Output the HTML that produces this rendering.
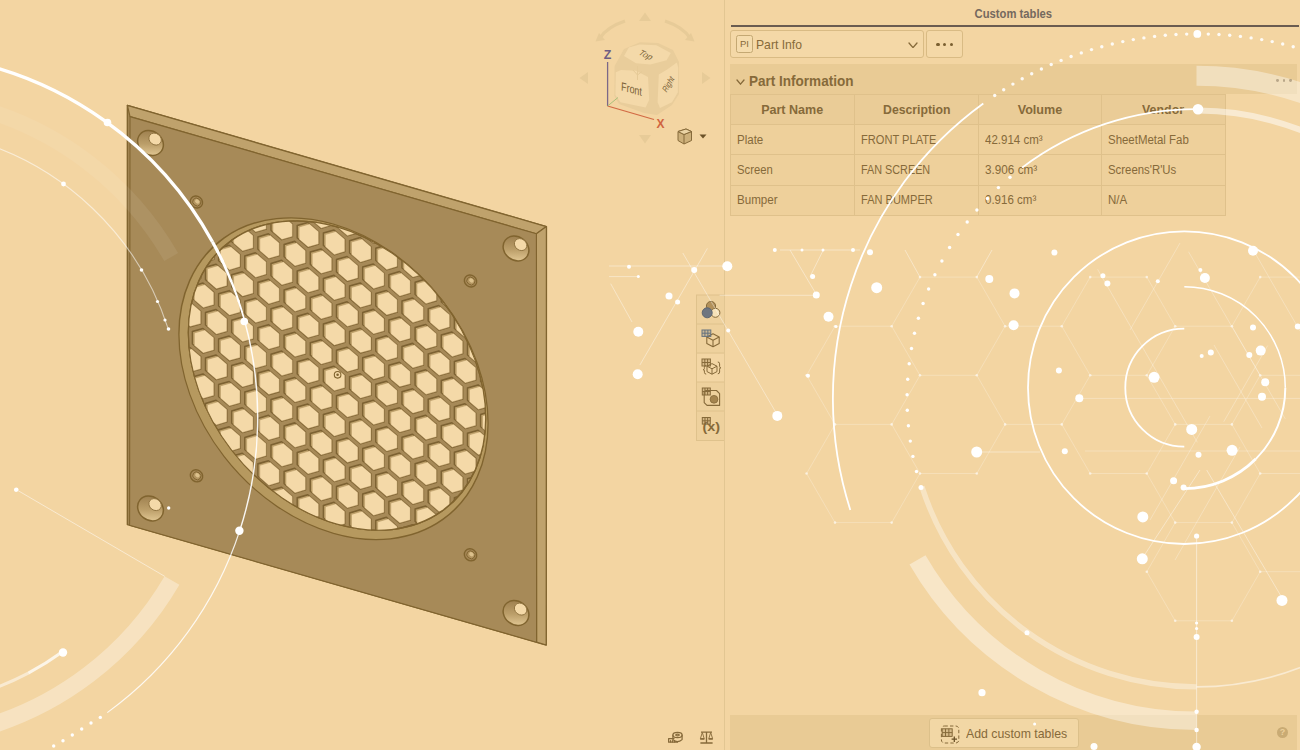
<!DOCTYPE html>
<html lang="en"><head><meta charset="utf-8"><title>Custom tables</title>
<style>

*{box-sizing:border-box;margin:0;padding:0}
html,body{width:1300px;height:750px;overflow:hidden;background:#f3d5a2;font-family:"Liberation Sans",sans-serif;color:#866a3a}
#view{position:absolute;left:0;top:0;width:725px;height:750px;overflow:hidden}
#model{position:absolute;left:0;top:0}
#panel{position:absolute;left:724px;top:0;width:576px;height:750px;border-left:1px solid #e2c692}
#decor{position:absolute;left:0;top:0;pointer-events:none}
.abs{position:absolute;white-space:nowrap}
.sx{display:inline-block;transform-origin:0 50%;white-space:nowrap}
.title{left:0;width:576px;top:7px;text-align:center;font-size:12px;font-weight:bold;color:#75695e}
.rule{left:5.5px;top:25.1px;width:568px;height:1.6px;background:#6a5c50}
.dd{left:5px;top:30px;width:194px;height:28px;border:1px solid #d9bb84;border-radius:3px;background:#f4d8a7}
.pi{left:4.5px;top:4px;width:17.6px;height:18px;border:1px solid #c4a873;border-radius:2.5px;font-size:9.5px;text-align:center;line-height:16.5px;color:#866a3a;background:#f5dcad;letter-spacing:-0.2px}
.ddt{left:25px;top:6px;font-size:13px;color:#866a3a}
.more{left:201px;top:30px;width:37px;height:28px;border:1px solid #d9bb84;border-radius:3px;background:#f4d8a7}
.dot{position:absolute;width:3.4px;height:3.4px;border-radius:50%;background:#7a5f30}
.sec{left:5px;top:64px;width:567px;height:30px;background:#e9cb95}
.sect{left:18.5px;top:8.5px;font-size:14px;font-weight:bold;color:#866a3a}
table{position:absolute;left:5px;top:94px;border-collapse:collapse;table-layout:fixed;width:496px}
td,th{border:1px solid #dfc18b;height:30.3px;font-size:12px;padding:0 0 0 6px;text-align:left;font-weight:normal;color:#866a3a;background:#eed09b;white-space:nowrap;overflow:hidden}
th{font-weight:bold;font-size:13px;text-align:center;padding:0;background:#eacc97;height:30px}
.foot{left:5px;top:714.6px;width:567px;height:36px;background:#e9cb95}
.addb{left:204px;top:718px;width:150px;height:30px;border:1px solid #dcc08a;border-radius:3px;background:#f2d7a5}
.addt{left:36px;top:7px;font-size:13px;color:#866a3a}
.help{left:552px;top:727px;width:11px;height:11px;border-radius:50%;background:#c9ab74;color:#ecd09c;font-size:9px;font-weight:bold;text-align:center;line-height:11px}
.tb{left:697px;width:27px;height:29px;border:1px solid #e0c490;background:#efd4a1}

</style></head>
<body>
<div id="view">
<svg id="model" width="725" height="750" viewBox="0 0 725 750">
<polygon points="127.4,105.4 546.4,226.6 546.2,645.0 127.4,524.6" fill="#a78a58" stroke="#80642f" stroke-width="1.5" stroke-linejoin="round"/>
<polygon points="127.4,105.4 546.4,226.6 536.4,233.8 130.0,116.6" fill="#bfa26c" stroke="#80642f" stroke-width="1.2" stroke-linejoin="round"/>
<polygon points="536.4,233.8 546.4,226.6 546.2,645.0 536.6,642.2" fill="#bfa26c" stroke="#80642f" stroke-width="1.2" stroke-linejoin="round"/>
<polygon points="130.0,116.6 536.4,233.8 536.6,642.2 129.6,525.2" fill="#a78a58" stroke="#80642f" stroke-width="1.1" stroke-linejoin="round"/>
<g transform="matrix(1,0.2875,0,1,130.0,116.6)">
<defs><clipPath id="cc"><circle cx="207.0" cy="199.4" r="148.7"/></clipPath></defs>
<circle cx="203.5" cy="203.6" r="154.6" fill="#b6995f" stroke="#80642f" stroke-width="1.3"/>
<circle cx="207.0" cy="199.4" r="148.7" fill="#a78a58" stroke="#80642f" stroke-width="1.2"/>
<g clip-path="url(#cc)">
<g fill="#c2a56e" stroke="#7d6232" stroke-width="1.5" stroke-linejoin="round">
<polygon points="164.8,32.0 175.5,38.2 175.5,50.5 164.8,56.7 154.1,50.5 154.1,38.2"/>
<polygon points="191.0,32.0 201.7,38.2 201.7,50.5 191.0,56.7 180.3,50.5 180.3,38.2"/>
<polygon points="217.2,32.0 227.9,38.2 227.9,50.5 217.2,56.7 206.5,50.5 206.5,38.2"/>
<polygon points="243.4,32.0 254.1,38.2 254.1,50.5 243.4,56.7 232.7,50.5 232.7,38.2"/>
<polygon points="125.5,54.7 136.2,60.9 136.2,73.2 125.5,79.4 114.8,73.2 114.8,60.9"/>
<polygon points="151.7,54.7 162.4,60.9 162.4,73.2 151.7,79.4 141.0,73.2 141.0,60.9"/>
<polygon points="177.9,54.7 188.6,60.9 188.6,73.2 177.9,79.4 167.2,73.2 167.2,60.9"/>
<polygon points="204.1,54.7 214.8,60.9 214.8,73.2 204.1,79.4 193.4,73.2 193.4,60.9"/>
<polygon points="230.3,54.7 241.0,60.9 241.0,73.2 230.3,79.4 219.6,73.2 219.6,60.9"/>
<polygon points="256.5,54.7 267.2,60.9 267.2,73.2 256.5,79.4 245.8,73.2 245.8,60.9"/>
<polygon points="282.7,54.7 293.4,60.9 293.4,73.2 282.7,79.4 272.0,73.2 272.0,60.9"/>
<polygon points="86.2,77.4 96.9,83.6 96.9,95.9 86.2,102.1 75.5,95.9 75.5,83.6"/>
<polygon points="112.4,77.4 123.1,83.6 123.1,95.9 112.4,102.1 101.7,95.9 101.7,83.6"/>
<polygon points="138.6,77.4 149.3,83.6 149.3,95.9 138.6,102.1 127.9,95.9 127.9,83.6"/>
<polygon points="164.8,77.4 175.5,83.6 175.5,95.9 164.8,102.1 154.1,95.9 154.1,83.6"/>
<polygon points="191.0,77.4 201.7,83.6 201.7,95.9 191.0,102.1 180.3,95.9 180.3,83.6"/>
<polygon points="217.2,77.4 227.9,83.6 227.9,95.9 217.2,102.1 206.5,95.9 206.5,83.6"/>
<polygon points="243.4,77.4 254.1,83.6 254.1,95.9 243.4,102.1 232.7,95.9 232.7,83.6"/>
<polygon points="269.6,77.4 280.3,83.6 280.3,95.9 269.6,102.1 258.9,95.9 258.9,83.6"/>
<polygon points="295.8,77.4 306.5,83.6 306.5,95.9 295.8,102.1 285.1,95.9 285.1,83.6"/>
<polygon points="322.0,77.4 332.7,83.6 332.7,95.9 322.0,102.1 311.3,95.9 311.3,83.6"/>
<polygon points="73.1,100.1 83.8,106.3 83.8,118.6 73.1,124.8 62.4,118.6 62.4,106.3"/>
<polygon points="99.3,100.1 110.0,106.3 110.0,118.6 99.3,124.8 88.6,118.6 88.6,106.3"/>
<polygon points="125.5,100.1 136.2,106.3 136.2,118.6 125.5,124.8 114.8,118.6 114.8,106.3"/>
<polygon points="151.7,100.1 162.4,106.3 162.4,118.6 151.7,124.8 141.0,118.6 141.0,106.3"/>
<polygon points="177.9,100.1 188.6,106.3 188.6,118.6 177.9,124.8 167.2,118.6 167.2,106.3"/>
<polygon points="204.1,100.1 214.8,106.3 214.8,118.6 204.1,124.8 193.4,118.6 193.4,106.3"/>
<polygon points="230.3,100.1 241.0,106.3 241.0,118.6 230.3,124.8 219.6,118.6 219.6,106.3"/>
<polygon points="256.5,100.1 267.2,106.3 267.2,118.6 256.5,124.8 245.8,118.6 245.8,106.3"/>
<polygon points="282.7,100.1 293.4,106.3 293.4,118.6 282.7,124.8 272.0,118.6 272.0,106.3"/>
<polygon points="308.9,100.1 319.6,106.3 319.6,118.6 308.9,124.8 298.2,118.6 298.2,106.3"/>
<polygon points="335.1,100.1 345.8,106.3 345.8,118.6 335.1,124.8 324.4,118.6 324.4,106.3"/>
<polygon points="60.0,122.8 70.7,129.0 70.7,141.3 60.0,147.5 49.3,141.3 49.3,129.0"/>
<polygon points="86.2,122.8 96.9,129.0 96.9,141.3 86.2,147.5 75.5,141.3 75.5,129.0"/>
<polygon points="112.4,122.8 123.1,129.0 123.1,141.3 112.4,147.5 101.7,141.3 101.7,129.0"/>
<polygon points="138.6,122.8 149.3,129.0 149.3,141.3 138.6,147.5 127.9,141.3 127.9,129.0"/>
<polygon points="164.8,122.8 175.5,129.0 175.5,141.3 164.8,147.5 154.1,141.3 154.1,129.0"/>
<polygon points="191.0,122.8 201.7,129.0 201.7,141.3 191.0,147.5 180.3,141.3 180.3,129.0"/>
<polygon points="217.2,122.8 227.9,129.0 227.9,141.3 217.2,147.5 206.5,141.3 206.5,129.0"/>
<polygon points="243.4,122.8 254.1,129.0 254.1,141.3 243.4,147.5 232.7,141.3 232.7,129.0"/>
<polygon points="269.6,122.8 280.3,129.0 280.3,141.3 269.6,147.5 258.9,141.3 258.9,129.0"/>
<polygon points="295.8,122.8 306.5,129.0 306.5,141.3 295.8,147.5 285.1,141.3 285.1,129.0"/>
<polygon points="322.0,122.8 332.7,129.0 332.7,141.3 322.0,147.5 311.3,141.3 311.3,129.0"/>
<polygon points="348.2,122.8 358.9,129.0 358.9,141.3 348.2,147.5 337.5,141.3 337.5,129.0"/>
<polygon points="73.1,145.5 83.8,151.7 83.8,164.0 73.1,170.1 62.4,164.0 62.4,151.7"/>
<polygon points="99.3,145.5 110.0,151.7 110.0,164.0 99.3,170.1 88.6,164.0 88.6,151.7"/>
<polygon points="125.5,145.5 136.2,151.7 136.2,164.0 125.5,170.1 114.8,164.0 114.8,151.7"/>
<polygon points="151.7,145.5 162.4,151.7 162.4,164.0 151.7,170.1 141.0,164.0 141.0,151.7"/>
<polygon points="177.9,145.5 188.6,151.7 188.6,164.0 177.9,170.1 167.2,164.0 167.2,151.7"/>
<polygon points="204.1,145.5 214.8,151.7 214.8,164.0 204.1,170.1 193.4,164.0 193.4,151.7"/>
<polygon points="230.3,145.5 241.0,151.7 241.0,164.0 230.3,170.1 219.6,164.0 219.6,151.7"/>
<polygon points="256.5,145.5 267.2,151.7 267.2,164.0 256.5,170.1 245.8,164.0 245.8,151.7"/>
<polygon points="282.7,145.5 293.4,151.7 293.4,164.0 282.7,170.1 272.0,164.0 272.0,151.7"/>
<polygon points="308.9,145.5 319.6,151.7 319.6,164.0 308.9,170.1 298.2,164.0 298.2,151.7"/>
<polygon points="335.1,145.5 345.8,151.7 345.8,164.0 335.1,170.1 324.4,164.0 324.4,151.7"/>
<polygon points="361.3,145.5 372.0,151.7 372.0,164.0 361.3,170.1 350.6,164.0 350.6,151.7"/>
<polygon points="60.0,168.2 70.7,174.3 70.7,186.7 60.0,192.8 49.3,186.7 49.3,174.3"/>
<polygon points="86.2,168.2 96.9,174.3 96.9,186.7 86.2,192.8 75.5,186.7 75.5,174.3"/>
<polygon points="112.4,168.2 123.1,174.3 123.1,186.7 112.4,192.8 101.7,186.7 101.7,174.3"/>
<polygon points="138.6,168.2 149.3,174.3 149.3,186.7 138.6,192.8 127.9,186.7 127.9,174.3"/>
<polygon points="164.8,168.2 175.5,174.3 175.5,186.7 164.8,192.8 154.1,186.7 154.1,174.3"/>
<polygon points="191.0,168.2 201.7,174.3 201.7,186.7 191.0,192.8 180.3,186.7 180.3,174.3"/>
<polygon points="217.2,168.2 227.9,174.3 227.9,186.7 217.2,192.8 206.5,186.7 206.5,174.3"/>
<polygon points="243.4,168.2 254.1,174.3 254.1,186.7 243.4,192.8 232.7,186.7 232.7,174.3"/>
<polygon points="269.6,168.2 280.3,174.3 280.3,186.7 269.6,192.8 258.9,186.7 258.9,174.3"/>
<polygon points="295.8,168.2 306.5,174.3 306.5,186.7 295.8,192.8 285.1,186.7 285.1,174.3"/>
<polygon points="322.0,168.2 332.7,174.3 332.7,186.7 322.0,192.8 311.3,186.7 311.3,174.3"/>
<polygon points="348.2,168.2 358.9,174.3 358.9,186.7 348.2,192.8 337.5,186.7 337.5,174.3"/>
<polygon points="46.9,190.9 57.6,197.0 57.6,209.4 46.9,215.5 36.2,209.4 36.2,197.0"/>
<polygon points="73.1,190.9 83.8,197.0 83.8,209.4 73.1,215.5 62.4,209.4 62.4,197.0"/>
<polygon points="99.3,190.9 110.0,197.0 110.0,209.4 99.3,215.5 88.6,209.4 88.6,197.0"/>
<polygon points="125.5,190.9 136.2,197.0 136.2,209.4 125.5,215.5 114.8,209.4 114.8,197.0"/>
<polygon points="151.7,190.9 162.4,197.0 162.4,209.4 151.7,215.5 141.0,209.4 141.0,197.0"/>
<polygon points="177.9,190.9 188.6,197.0 188.6,209.4 177.9,215.5 167.2,209.4 167.2,197.0"/>
<polygon points="204.1,190.9 214.8,197.0 214.8,209.4 204.1,215.5 193.4,209.4 193.4,197.0"/>
<polygon points="230.3,190.9 241.0,197.0 241.0,209.4 230.3,215.5 219.6,209.4 219.6,197.0"/>
<polygon points="256.5,190.9 267.2,197.0 267.2,209.4 256.5,215.5 245.8,209.4 245.8,197.0"/>
<polygon points="282.7,190.9 293.4,197.0 293.4,209.4 282.7,215.5 272.0,209.4 272.0,197.0"/>
<polygon points="308.9,190.9 319.6,197.0 319.6,209.4 308.9,215.5 298.2,209.4 298.2,197.0"/>
<polygon points="335.1,190.9 345.8,197.0 345.8,209.4 335.1,215.5 324.4,209.4 324.4,197.0"/>
<polygon points="361.3,190.9 372.0,197.0 372.0,209.4 361.3,215.5 350.6,209.4 350.6,197.0"/>
<polygon points="60.0,213.6 70.7,219.7 70.7,232.1 60.0,238.2 49.3,232.1 49.3,219.7"/>
<polygon points="86.2,213.6 96.9,219.7 96.9,232.1 86.2,238.2 75.5,232.1 75.5,219.7"/>
<polygon points="112.4,213.6 123.1,219.7 123.1,232.1 112.4,238.2 101.7,232.1 101.7,219.7"/>
<polygon points="138.6,213.6 149.3,219.7 149.3,232.1 138.6,238.2 127.9,232.1 127.9,219.7"/>
<polygon points="164.8,213.6 175.5,219.7 175.5,232.1 164.8,238.2 154.1,232.1 154.1,219.7"/>
<polygon points="191.0,213.6 201.7,219.7 201.7,232.1 191.0,238.2 180.3,232.1 180.3,219.7"/>
<polygon points="217.2,213.6 227.9,219.7 227.9,232.1 217.2,238.2 206.5,232.1 206.5,219.7"/>
<polygon points="243.4,213.6 254.1,219.7 254.1,232.1 243.4,238.2 232.7,232.1 232.7,219.7"/>
<polygon points="269.6,213.6 280.3,219.7 280.3,232.1 269.6,238.2 258.9,232.1 258.9,219.7"/>
<polygon points="295.8,213.6 306.5,219.7 306.5,232.1 295.8,238.2 285.1,232.1 285.1,219.7"/>
<polygon points="322.0,213.6 332.7,219.7 332.7,232.1 322.0,238.2 311.3,232.1 311.3,219.7"/>
<polygon points="348.2,213.6 358.9,219.7 358.9,232.1 348.2,238.2 337.5,232.1 337.5,219.7"/>
<polygon points="73.1,236.3 83.8,242.4 83.8,254.7 73.1,260.9 62.4,254.7 62.4,242.4"/>
<polygon points="99.3,236.3 110.0,242.4 110.0,254.7 99.3,260.9 88.6,254.7 88.6,242.4"/>
<polygon points="125.5,236.3 136.2,242.4 136.2,254.7 125.5,260.9 114.8,254.7 114.8,242.4"/>
<polygon points="151.7,236.3 162.4,242.4 162.4,254.7 151.7,260.9 141.0,254.7 141.0,242.4"/>
<polygon points="177.9,236.3 188.6,242.4 188.6,254.7 177.9,260.9 167.2,254.7 167.2,242.4"/>
<polygon points="204.1,236.3 214.8,242.4 214.8,254.7 204.1,260.9 193.4,254.7 193.4,242.4"/>
<polygon points="230.3,236.3 241.0,242.4 241.0,254.7 230.3,260.9 219.6,254.7 219.6,242.4"/>
<polygon points="256.5,236.3 267.2,242.4 267.2,254.7 256.5,260.9 245.8,254.7 245.8,242.4"/>
<polygon points="282.7,236.3 293.4,242.4 293.4,254.7 282.7,260.9 272.0,254.7 272.0,242.4"/>
<polygon points="308.9,236.3 319.6,242.4 319.6,254.7 308.9,260.9 298.2,254.7 298.2,242.4"/>
<polygon points="335.1,236.3 345.8,242.4 345.8,254.7 335.1,260.9 324.4,254.7 324.4,242.4"/>
<polygon points="361.3,236.3 372.0,242.4 372.0,254.7 361.3,260.9 350.6,254.7 350.6,242.4"/>
<polygon points="60.0,258.9 70.7,265.1 70.7,277.4 60.0,283.6 49.3,277.4 49.3,265.1"/>
<polygon points="86.2,258.9 96.9,265.1 96.9,277.4 86.2,283.6 75.5,277.4 75.5,265.1"/>
<polygon points="112.4,258.9 123.1,265.1 123.1,277.4 112.4,283.6 101.7,277.4 101.7,265.1"/>
<polygon points="138.6,258.9 149.3,265.1 149.3,277.4 138.6,283.6 127.9,277.4 127.9,265.1"/>
<polygon points="164.8,258.9 175.5,265.1 175.5,277.4 164.8,283.6 154.1,277.4 154.1,265.1"/>
<polygon points="191.0,258.9 201.7,265.1 201.7,277.4 191.0,283.6 180.3,277.4 180.3,265.1"/>
<polygon points="217.2,258.9 227.9,265.1 227.9,277.4 217.2,283.6 206.5,277.4 206.5,265.1"/>
<polygon points="243.4,258.9 254.1,265.1 254.1,277.4 243.4,283.6 232.7,277.4 232.7,265.1"/>
<polygon points="269.6,258.9 280.3,265.1 280.3,277.4 269.6,283.6 258.9,277.4 258.9,265.1"/>
<polygon points="295.8,258.9 306.5,265.1 306.5,277.4 295.8,283.6 285.1,277.4 285.1,265.1"/>
<polygon points="322.0,258.9 332.7,265.1 332.7,277.4 322.0,283.6 311.3,277.4 311.3,265.1"/>
<polygon points="348.2,258.9 358.9,265.1 358.9,277.4 348.2,283.6 337.5,277.4 337.5,265.1"/>
<polygon points="99.3,281.6 110.0,287.8 110.0,300.1 99.3,306.3 88.6,300.1 88.6,287.8"/>
<polygon points="125.5,281.6 136.2,287.8 136.2,300.1 125.5,306.3 114.8,300.1 114.8,287.8"/>
<polygon points="151.7,281.6 162.4,287.8 162.4,300.1 151.7,306.3 141.0,300.1 141.0,287.8"/>
<polygon points="177.9,281.6 188.6,287.8 188.6,300.1 177.9,306.3 167.2,300.1 167.2,287.8"/>
<polygon points="204.1,281.6 214.8,287.8 214.8,300.1 204.1,306.3 193.4,300.1 193.4,287.8"/>
<polygon points="230.3,281.6 241.0,287.8 241.0,300.1 230.3,306.3 219.6,300.1 219.6,287.8"/>
<polygon points="256.5,281.6 267.2,287.8 267.2,300.1 256.5,306.3 245.8,300.1 245.8,287.8"/>
<polygon points="282.7,281.6 293.4,287.8 293.4,300.1 282.7,306.3 272.0,300.1 272.0,287.8"/>
<polygon points="308.9,281.6 319.6,287.8 319.6,300.1 308.9,306.3 298.2,300.1 298.2,287.8"/>
<polygon points="335.1,281.6 345.8,287.8 345.8,300.1 335.1,306.3 324.4,300.1 324.4,287.8"/>
<polygon points="112.4,304.3 123.1,310.5 123.1,322.8 112.4,329.0 101.7,322.8 101.7,310.5"/>
<polygon points="138.6,304.3 149.3,310.5 149.3,322.8 138.6,329.0 127.9,322.8 127.9,310.5"/>
<polygon points="164.8,304.3 175.5,310.5 175.5,322.8 164.8,329.0 154.1,322.8 154.1,310.5"/>
<polygon points="191.0,304.3 201.7,310.5 201.7,322.8 191.0,329.0 180.3,322.8 180.3,310.5"/>
<polygon points="217.2,304.3 227.9,310.5 227.9,322.8 217.2,329.0 206.5,322.8 206.5,310.5"/>
<polygon points="243.4,304.3 254.1,310.5 254.1,322.8 243.4,329.0 232.7,322.8 232.7,310.5"/>
<polygon points="269.6,304.3 280.3,310.5 280.3,322.8 269.6,329.0 258.9,322.8 258.9,310.5"/>
<polygon points="295.8,304.3 306.5,310.5 306.5,322.8 295.8,329.0 285.1,322.8 285.1,310.5"/>
<polygon points="125.5,327.0 136.2,333.2 136.2,345.5 125.5,351.7 114.8,345.5 114.8,333.2"/>
<polygon points="151.7,327.0 162.4,333.2 162.4,345.5 151.7,351.7 141.0,345.5 141.0,333.2"/>
<polygon points="177.9,327.0 188.6,333.2 188.6,345.5 177.9,351.7 167.2,345.5 167.2,333.2"/>
<polygon points="204.1,327.0 214.8,333.2 214.8,345.5 204.1,351.7 193.4,345.5 193.4,333.2"/>
<polygon points="230.3,327.0 241.0,333.2 241.0,345.5 230.3,351.7 219.6,345.5 219.6,333.2"/>
<polygon points="256.5,327.0 267.2,333.2 267.2,345.5 256.5,351.7 245.8,345.5 245.8,333.2"/>
<polygon points="282.7,327.0 293.4,333.2 293.4,345.5 282.7,351.7 272.0,345.5 272.0,333.2"/>
<polygon points="191.0,349.7 201.7,355.9 201.7,368.2 191.0,374.4 180.3,368.2 180.3,355.9"/>
<polygon points="217.2,349.7 227.9,355.9 227.9,368.2 217.2,374.4 206.5,368.2 206.5,355.9"/>
</g>
<g fill="#f4d9a8" stroke="#a88a55" stroke-width="0.4">
<polygon points="166.5,33.0 175.5,38.2 175.5,50.5 165.0,56.6 156.0,51.4 156.0,39.1"/>
<polygon points="192.7,33.0 201.7,38.2 201.7,50.5 191.2,56.6 182.2,51.4 182.2,39.1"/>
<polygon points="218.9,33.0 227.9,38.2 227.9,50.5 217.4,56.6 208.4,51.4 208.4,39.1"/>
<polygon points="245.1,33.0 254.1,38.2 254.1,50.5 243.6,56.6 234.6,51.4 234.6,39.1"/>
<polygon points="127.2,55.7 136.2,60.9 136.2,73.2 125.7,79.3 116.7,74.1 116.7,61.8"/>
<polygon points="153.4,55.7 162.4,60.9 162.4,73.2 151.9,79.3 142.9,74.1 142.9,61.8"/>
<polygon points="179.6,55.7 188.6,60.9 188.6,73.2 178.1,79.3 169.1,74.1 169.1,61.8"/>
<polygon points="205.8,55.7 214.8,60.9 214.8,73.2 204.3,79.3 195.3,74.1 195.3,61.8"/>
<polygon points="232.0,55.7 241.0,60.9 241.0,73.2 230.5,79.3 221.5,74.1 221.5,61.8"/>
<polygon points="258.2,55.7 267.2,60.9 267.2,73.2 256.7,79.3 247.7,74.1 247.7,61.8"/>
<polygon points="284.4,55.7 293.4,60.9 293.4,73.2 282.9,79.3 273.9,74.1 273.9,61.8"/>
<polygon points="87.9,78.4 96.9,83.6 96.9,95.9 86.4,102.0 77.4,96.8 77.4,84.5"/>
<polygon points="114.1,78.4 123.1,83.6 123.1,95.9 112.6,102.0 103.6,96.8 103.6,84.5"/>
<polygon points="140.3,78.4 149.3,83.6 149.3,95.9 138.8,102.0 129.8,96.8 129.8,84.5"/>
<polygon points="166.5,78.4 175.5,83.6 175.5,95.9 165.0,102.0 156.0,96.8 156.0,84.5"/>
<polygon points="192.7,78.4 201.7,83.6 201.7,95.9 191.2,102.0 182.2,96.8 182.2,84.5"/>
<polygon points="218.9,78.4 227.9,83.6 227.9,95.9 217.4,102.0 208.4,96.8 208.4,84.5"/>
<polygon points="245.1,78.4 254.1,83.6 254.1,95.9 243.6,102.0 234.6,96.8 234.6,84.5"/>
<polygon points="271.3,78.4 280.3,83.6 280.3,95.9 269.8,102.0 260.8,96.8 260.8,84.5"/>
<polygon points="297.5,78.4 306.5,83.6 306.5,95.9 296.0,102.0 287.0,96.8 287.0,84.5"/>
<polygon points="323.7,78.4 332.7,83.6 332.7,95.9 322.2,102.0 313.2,96.8 313.2,84.5"/>
<polygon points="74.8,101.1 83.8,106.3 83.8,118.6 73.3,124.7 64.3,119.5 64.3,107.2"/>
<polygon points="101.0,101.1 110.0,106.3 110.0,118.6 99.5,124.7 90.5,119.5 90.5,107.2"/>
<polygon points="127.2,101.1 136.2,106.3 136.2,118.6 125.7,124.7 116.7,119.5 116.7,107.2"/>
<polygon points="153.4,101.1 162.4,106.3 162.4,118.6 151.9,124.7 142.9,119.5 142.9,107.2"/>
<polygon points="179.6,101.1 188.6,106.3 188.6,118.6 178.1,124.7 169.1,119.5 169.1,107.2"/>
<polygon points="205.8,101.1 214.8,106.3 214.8,118.6 204.3,124.7 195.3,119.5 195.3,107.2"/>
<polygon points="232.0,101.1 241.0,106.3 241.0,118.6 230.5,124.7 221.5,119.5 221.5,107.2"/>
<polygon points="258.2,101.1 267.2,106.3 267.2,118.6 256.7,124.7 247.7,119.5 247.7,107.2"/>
<polygon points="284.4,101.1 293.4,106.3 293.4,118.6 282.9,124.7 273.9,119.5 273.9,107.2"/>
<polygon points="310.6,101.1 319.6,106.3 319.6,118.6 309.1,124.7 300.1,119.5 300.1,107.2"/>
<polygon points="336.8,101.1 345.8,106.3 345.8,118.6 335.3,124.7 326.3,119.5 326.3,107.2"/>
<polygon points="61.7,123.8 70.7,129.0 70.7,141.3 60.2,147.4 51.2,142.2 51.2,129.9"/>
<polygon points="87.9,123.8 96.9,129.0 96.9,141.3 86.4,147.4 77.4,142.2 77.4,129.9"/>
<polygon points="114.1,123.8 123.1,129.0 123.1,141.3 112.6,147.4 103.6,142.2 103.6,129.9"/>
<polygon points="140.3,123.8 149.3,129.0 149.3,141.3 138.8,147.4 129.8,142.2 129.8,129.9"/>
<polygon points="166.5,123.8 175.5,129.0 175.5,141.3 165.0,147.4 156.0,142.2 156.0,129.9"/>
<polygon points="192.7,123.8 201.7,129.0 201.7,141.3 191.2,147.4 182.2,142.2 182.2,129.9"/>
<polygon points="218.9,123.8 227.9,129.0 227.9,141.3 217.4,147.4 208.4,142.2 208.4,129.9"/>
<polygon points="245.1,123.8 254.1,129.0 254.1,141.3 243.6,147.4 234.6,142.2 234.6,129.9"/>
<polygon points="271.3,123.8 280.3,129.0 280.3,141.3 269.8,147.4 260.8,142.2 260.8,129.9"/>
<polygon points="297.5,123.8 306.5,129.0 306.5,141.3 296.0,147.4 287.0,142.2 287.0,129.9"/>
<polygon points="323.7,123.8 332.7,129.0 332.7,141.3 322.2,147.4 313.2,142.2 313.2,129.9"/>
<polygon points="349.9,123.8 358.9,129.0 358.9,141.3 348.4,147.4 339.4,142.2 339.4,129.9"/>
<polygon points="74.8,146.5 83.8,151.7 83.8,164.0 73.3,170.0 64.3,164.9 64.3,152.6"/>
<polygon points="101.0,146.5 110.0,151.7 110.0,164.0 99.5,170.0 90.5,164.9 90.5,152.6"/>
<polygon points="127.2,146.5 136.2,151.7 136.2,164.0 125.7,170.0 116.7,164.9 116.7,152.6"/>
<polygon points="153.4,146.5 162.4,151.7 162.4,164.0 151.9,170.0 142.9,164.9 142.9,152.6"/>
<polygon points="179.6,146.5 188.6,151.7 188.6,164.0 178.1,170.0 169.1,164.9 169.1,152.6"/>
<polygon points="205.8,146.5 214.8,151.7 214.8,164.0 204.3,170.0 195.3,164.9 195.3,152.6"/>
<polygon points="232.0,146.5 241.0,151.7 241.0,164.0 230.5,170.0 221.5,164.9 221.5,152.6"/>
<polygon points="258.2,146.5 267.2,151.7 267.2,164.0 256.7,170.0 247.7,164.9 247.7,152.6"/>
<polygon points="284.4,146.5 293.4,151.7 293.4,164.0 282.9,170.0 273.9,164.9 273.9,152.6"/>
<polygon points="310.6,146.5 319.6,151.7 319.6,164.0 309.1,170.0 300.1,164.9 300.1,152.6"/>
<polygon points="336.8,146.5 345.8,151.7 345.8,164.0 335.3,170.0 326.3,164.9 326.3,152.6"/>
<polygon points="363.0,146.5 372.0,151.7 372.0,164.0 361.5,170.0 352.5,164.9 352.5,152.6"/>
<polygon points="61.7,169.2 70.7,174.3 70.7,186.7 60.2,192.7 51.2,187.6 51.2,175.2"/>
<polygon points="87.9,169.2 96.9,174.3 96.9,186.7 86.4,192.7 77.4,187.6 77.4,175.2"/>
<polygon points="114.1,169.2 123.1,174.3 123.1,186.7 112.6,192.7 103.6,187.6 103.6,175.2"/>
<polygon points="140.3,169.2 149.3,174.3 149.3,186.7 138.8,192.7 129.8,187.6 129.8,175.2"/>
<polygon points="166.5,169.2 175.5,174.3 175.5,186.7 165.0,192.7 156.0,187.6 156.0,175.2"/>
<polygon points="192.7,169.2 201.7,174.3 201.7,186.7 191.2,192.7 182.2,187.6 182.2,175.2"/>
<polygon points="218.9,169.2 227.9,174.3 227.9,186.7 217.4,192.7 208.4,187.6 208.4,175.2"/>
<polygon points="245.1,169.2 254.1,174.3 254.1,186.7 243.6,192.7 234.6,187.6 234.6,175.2"/>
<polygon points="271.3,169.2 280.3,174.3 280.3,186.7 269.8,192.7 260.8,187.6 260.8,175.2"/>
<polygon points="297.5,169.2 306.5,174.3 306.5,186.7 296.0,192.7 287.0,187.6 287.0,175.2"/>
<polygon points="323.7,169.2 332.7,174.3 332.7,186.7 322.2,192.7 313.2,187.6 313.2,175.2"/>
<polygon points="349.9,169.2 358.9,174.3 358.9,186.7 348.4,192.7 339.4,187.6 339.4,175.2"/>
<polygon points="48.6,191.9 57.6,197.0 57.6,209.4 47.1,215.4 38.1,210.3 38.1,197.9"/>
<polygon points="74.8,191.9 83.8,197.0 83.8,209.4 73.3,215.4 64.3,210.3 64.3,197.9"/>
<polygon points="101.0,191.9 110.0,197.0 110.0,209.4 99.5,215.4 90.5,210.3 90.5,197.9"/>
<polygon points="127.2,191.9 136.2,197.0 136.2,209.4 125.7,215.4 116.7,210.3 116.7,197.9"/>
<polygon points="153.4,191.9 162.4,197.0 162.4,209.4 151.9,215.4 142.9,210.3 142.9,197.9"/>
<polygon points="179.6,191.9 188.6,197.0 188.6,209.4 178.1,215.4 169.1,210.3 169.1,197.9"/>
<polygon points="205.8,191.9 214.8,197.0 214.8,209.4 204.3,215.4 195.3,210.3 195.3,197.9"/>
<polygon points="232.0,191.9 241.0,197.0 241.0,209.4 230.5,215.4 221.5,210.3 221.5,197.9"/>
<polygon points="258.2,191.9 267.2,197.0 267.2,209.4 256.7,215.4 247.7,210.3 247.7,197.9"/>
<polygon points="284.4,191.9 293.4,197.0 293.4,209.4 282.9,215.4 273.9,210.3 273.9,197.9"/>
<polygon points="310.6,191.9 319.6,197.0 319.6,209.4 309.1,215.4 300.1,210.3 300.1,197.9"/>
<polygon points="336.8,191.9 345.8,197.0 345.8,209.4 335.3,215.4 326.3,210.3 326.3,197.9"/>
<polygon points="363.0,191.9 372.0,197.0 372.0,209.4 361.5,215.4 352.5,210.3 352.5,197.9"/>
<polygon points="61.7,214.6 70.7,219.7 70.7,232.1 60.2,238.1 51.2,233.0 51.2,220.6"/>
<polygon points="87.9,214.6 96.9,219.7 96.9,232.1 86.4,238.1 77.4,233.0 77.4,220.6"/>
<polygon points="114.1,214.6 123.1,219.7 123.1,232.1 112.6,238.1 103.6,233.0 103.6,220.6"/>
<polygon points="140.3,214.6 149.3,219.7 149.3,232.1 138.8,238.1 129.8,233.0 129.8,220.6"/>
<polygon points="166.5,214.6 175.5,219.7 175.5,232.1 165.0,238.1 156.0,233.0 156.0,220.6"/>
<polygon points="192.7,214.6 201.7,219.7 201.7,232.1 191.2,238.1 182.2,233.0 182.2,220.6"/>
<polygon points="218.9,214.6 227.9,219.7 227.9,232.1 217.4,238.1 208.4,233.0 208.4,220.6"/>
<polygon points="245.1,214.6 254.1,219.7 254.1,232.1 243.6,238.1 234.6,233.0 234.6,220.6"/>
<polygon points="271.3,214.6 280.3,219.7 280.3,232.1 269.8,238.1 260.8,233.0 260.8,220.6"/>
<polygon points="297.5,214.6 306.5,219.7 306.5,232.1 296.0,238.1 287.0,233.0 287.0,220.6"/>
<polygon points="323.7,214.6 332.7,219.7 332.7,232.1 322.2,238.1 313.2,233.0 313.2,220.6"/>
<polygon points="349.9,214.6 358.9,219.7 358.9,232.1 348.4,238.1 339.4,233.0 339.4,220.6"/>
<polygon points="74.8,237.3 83.8,242.4 83.8,254.7 73.3,260.8 64.3,255.6 64.3,243.3"/>
<polygon points="101.0,237.3 110.0,242.4 110.0,254.7 99.5,260.8 90.5,255.6 90.5,243.3"/>
<polygon points="127.2,237.3 136.2,242.4 136.2,254.7 125.7,260.8 116.7,255.6 116.7,243.3"/>
<polygon points="153.4,237.3 162.4,242.4 162.4,254.7 151.9,260.8 142.9,255.6 142.9,243.3"/>
<polygon points="179.6,237.3 188.6,242.4 188.6,254.7 178.1,260.8 169.1,255.6 169.1,243.3"/>
<polygon points="205.8,237.3 214.8,242.4 214.8,254.7 204.3,260.8 195.3,255.6 195.3,243.3"/>
<polygon points="232.0,237.3 241.0,242.4 241.0,254.7 230.5,260.8 221.5,255.6 221.5,243.3"/>
<polygon points="258.2,237.3 267.2,242.4 267.2,254.7 256.7,260.8 247.7,255.6 247.7,243.3"/>
<polygon points="284.4,237.3 293.4,242.4 293.4,254.7 282.9,260.8 273.9,255.6 273.9,243.3"/>
<polygon points="310.6,237.3 319.6,242.4 319.6,254.7 309.1,260.8 300.1,255.6 300.1,243.3"/>
<polygon points="336.8,237.3 345.8,242.4 345.8,254.7 335.3,260.8 326.3,255.6 326.3,243.3"/>
<polygon points="363.0,237.3 372.0,242.4 372.0,254.7 361.5,260.8 352.5,255.6 352.5,243.3"/>
<polygon points="61.7,259.9 70.7,265.1 70.7,277.4 60.2,283.5 51.2,278.3 51.2,266.0"/>
<polygon points="87.9,259.9 96.9,265.1 96.9,277.4 86.4,283.5 77.4,278.3 77.4,266.0"/>
<polygon points="114.1,259.9 123.1,265.1 123.1,277.4 112.6,283.5 103.6,278.3 103.6,266.0"/>
<polygon points="140.3,259.9 149.3,265.1 149.3,277.4 138.8,283.5 129.8,278.3 129.8,266.0"/>
<polygon points="166.5,259.9 175.5,265.1 175.5,277.4 165.0,283.5 156.0,278.3 156.0,266.0"/>
<polygon points="192.7,259.9 201.7,265.1 201.7,277.4 191.2,283.5 182.2,278.3 182.2,266.0"/>
<polygon points="218.9,259.9 227.9,265.1 227.9,277.4 217.4,283.5 208.4,278.3 208.4,266.0"/>
<polygon points="245.1,259.9 254.1,265.1 254.1,277.4 243.6,283.5 234.6,278.3 234.6,266.0"/>
<polygon points="271.3,259.9 280.3,265.1 280.3,277.4 269.8,283.5 260.8,278.3 260.8,266.0"/>
<polygon points="297.5,259.9 306.5,265.1 306.5,277.4 296.0,283.5 287.0,278.3 287.0,266.0"/>
<polygon points="323.7,259.9 332.7,265.1 332.7,277.4 322.2,283.5 313.2,278.3 313.2,266.0"/>
<polygon points="349.9,259.9 358.9,265.1 358.9,277.4 348.4,283.5 339.4,278.3 339.4,266.0"/>
<polygon points="101.0,282.6 110.0,287.8 110.0,300.1 99.5,306.2 90.5,301.0 90.5,288.7"/>
<polygon points="127.2,282.6 136.2,287.8 136.2,300.1 125.7,306.2 116.7,301.0 116.7,288.7"/>
<polygon points="153.4,282.6 162.4,287.8 162.4,300.1 151.9,306.2 142.9,301.0 142.9,288.7"/>
<polygon points="179.6,282.6 188.6,287.8 188.6,300.1 178.1,306.2 169.1,301.0 169.1,288.7"/>
<polygon points="205.8,282.6 214.8,287.8 214.8,300.1 204.3,306.2 195.3,301.0 195.3,288.7"/>
<polygon points="232.0,282.6 241.0,287.8 241.0,300.1 230.5,306.2 221.5,301.0 221.5,288.7"/>
<polygon points="258.2,282.6 267.2,287.8 267.2,300.1 256.7,306.2 247.7,301.0 247.7,288.7"/>
<polygon points="284.4,282.6 293.4,287.8 293.4,300.1 282.9,306.2 273.9,301.0 273.9,288.7"/>
<polygon points="310.6,282.6 319.6,287.8 319.6,300.1 309.1,306.2 300.1,301.0 300.1,288.7"/>
<polygon points="336.8,282.6 345.8,287.8 345.8,300.1 335.3,306.2 326.3,301.0 326.3,288.7"/>
<polygon points="114.1,305.3 123.1,310.5 123.1,322.8 112.6,328.9 103.6,323.7 103.6,311.4"/>
<polygon points="140.3,305.3 149.3,310.5 149.3,322.8 138.8,328.9 129.8,323.7 129.8,311.4"/>
<polygon points="166.5,305.3 175.5,310.5 175.5,322.8 165.0,328.9 156.0,323.7 156.0,311.4"/>
<polygon points="192.7,305.3 201.7,310.5 201.7,322.8 191.2,328.9 182.2,323.7 182.2,311.4"/>
<polygon points="218.9,305.3 227.9,310.5 227.9,322.8 217.4,328.9 208.4,323.7 208.4,311.4"/>
<polygon points="245.1,305.3 254.1,310.5 254.1,322.8 243.6,328.9 234.6,323.7 234.6,311.4"/>
<polygon points="271.3,305.3 280.3,310.5 280.3,322.8 269.8,328.9 260.8,323.7 260.8,311.4"/>
<polygon points="297.5,305.3 306.5,310.5 306.5,322.8 296.0,328.9 287.0,323.7 287.0,311.4"/>
<polygon points="127.2,328.0 136.2,333.2 136.2,345.5 125.7,351.6 116.7,346.4 116.7,334.1"/>
<polygon points="153.4,328.0 162.4,333.2 162.4,345.5 151.9,351.6 142.9,346.4 142.9,334.1"/>
<polygon points="179.6,328.0 188.6,333.2 188.6,345.5 178.1,351.6 169.1,346.4 169.1,334.1"/>
<polygon points="205.8,328.0 214.8,333.2 214.8,345.5 204.3,351.6 195.3,346.4 195.3,334.1"/>
<polygon points="232.0,328.0 241.0,333.2 241.0,345.5 230.5,351.6 221.5,346.4 221.5,334.1"/>
<polygon points="258.2,328.0 267.2,333.2 267.2,345.5 256.7,351.6 247.7,346.4 247.7,334.1"/>
<polygon points="284.4,328.0 293.4,333.2 293.4,345.5 282.9,351.6 273.9,346.4 273.9,334.1"/>
<polygon points="192.7,350.7 201.7,355.9 201.7,368.2 191.2,374.3 182.2,369.1 182.2,356.8"/>
<polygon points="218.9,350.7 227.9,355.9 227.9,368.2 217.4,374.3 208.4,369.1 208.4,356.8"/>
</g>
</g>
<circle cx="207.0" cy="199.4" r="148.7" fill="none" stroke="#80642f" stroke-width="1.2"/>
</g>
<defs><linearGradient id="cs" x1="0.1" y1="0.2" x2="0.8" y2="1"><stop offset="0" stop-color="#9f8150"/><stop offset="0.5" stop-color="#bb9e69"/><stop offset="1" stop-color="#e6cc98"/></linearGradient></defs>
<ellipse cx="150.5" cy="143" rx="13.6" ry="11.6" transform="rotate(38 150.5 143)" fill="url(#cs)" stroke="#80642f" stroke-width="1.5"/><ellipse cx="155.1" cy="139.1" rx="6.6" ry="5.6" transform="rotate(38 155.1 139.1)" fill="#f4d9a8" stroke="#8f7340" stroke-width="0.9"/>
<ellipse cx="516" cy="248.5" rx="13.6" ry="11.6" transform="rotate(38 516 248.5)" fill="url(#cs)" stroke="#80642f" stroke-width="1.5"/><ellipse cx="520.6" cy="244.6" rx="6.6" ry="5.6" transform="rotate(38 520.6 244.6)" fill="#f4d9a8" stroke="#8f7340" stroke-width="0.9"/>
<ellipse cx="150.5" cy="508.5" rx="13.6" ry="11.6" transform="rotate(38 150.5 508.5)" fill="url(#cs)" stroke="#80642f" stroke-width="1.5"/><ellipse cx="155.1" cy="504.6" rx="6.6" ry="5.6" transform="rotate(38 155.1 504.6)" fill="#f4d9a8" stroke="#8f7340" stroke-width="0.9"/>
<ellipse cx="516" cy="613" rx="13.6" ry="11.6" transform="rotate(38 516 613)" fill="url(#cs)" stroke="#80642f" stroke-width="1.5"/><ellipse cx="520.6" cy="609.1" rx="6.6" ry="5.6" transform="rotate(38 520.6 609.1)" fill="#f4d9a8" stroke="#8f7340" stroke-width="0.9"/>
<ellipse cx="196.4" cy="202" rx="6.4" ry="5.8" transform="rotate(38 196.4 202)" fill="#a58756" stroke="#80642f" stroke-width="1.4"/><ellipse cx="196.70000000000002" cy="201.8" rx="4.2" ry="3.7" transform="rotate(38 196.4 202)" fill="#b39561" stroke="#80642f" stroke-width="0.9"/><ellipse cx="197.3" cy="201.5" rx="2.4" ry="1.9" transform="rotate(38 197.3 201.5)" fill="#dcc18c"/>
<ellipse cx="470.5" cy="281" rx="6.4" ry="5.8" transform="rotate(38 470.5 281)" fill="#a58756" stroke="#80642f" stroke-width="1.4"/><ellipse cx="470.8" cy="280.8" rx="4.2" ry="3.7" transform="rotate(38 470.5 281)" fill="#b39561" stroke="#80642f" stroke-width="0.9"/><ellipse cx="471.4" cy="280.5" rx="2.4" ry="1.9" transform="rotate(38 471.4 280.5)" fill="#dcc18c"/>
<ellipse cx="196.5" cy="475.8" rx="6.4" ry="5.8" transform="rotate(38 196.5 475.8)" fill="#a58756" stroke="#80642f" stroke-width="1.4"/><ellipse cx="196.8" cy="475.6" rx="4.2" ry="3.7" transform="rotate(38 196.5 475.8)" fill="#b39561" stroke="#80642f" stroke-width="0.9"/><ellipse cx="197.4" cy="475.3" rx="2.4" ry="1.9" transform="rotate(38 197.4 475.3)" fill="#dcc18c"/>
<ellipse cx="470.5" cy="554.8" rx="6.4" ry="5.8" transform="rotate(38 470.5 554.8)" fill="#a58756" stroke="#80642f" stroke-width="1.4"/><ellipse cx="470.8" cy="554.5999999999999" rx="4.2" ry="3.7" transform="rotate(38 470.5 554.8)" fill="#b39561" stroke="#80642f" stroke-width="0.9"/><ellipse cx="471.4" cy="554.3" rx="2.4" ry="1.9" transform="rotate(38 471.4 554.3)" fill="#dcc18c"/>
<circle cx="337.6" cy="374.8" r="3.3" fill="#f4d9a8" stroke="#80642f" stroke-width="1.1"/><circle cx="337.6" cy="374.8" r="1.3" fill="#80642f"/>
</svg>
<svg class="abs" style="left:696px;top:294px" width="30" height="148" viewBox="696 294 30 148">
<rect x="696.5" y="295" width="28" height="145.5" fill="#eed19d" stroke="#dfc28c" stroke-width="1"/>
<rect x="697" y="353.5" width="27" height="28.5" fill="#f3d6a4"/>
<g stroke="#dfc28c" stroke-width="1"><line x1="696.5" y1="324" x2="724.5" y2="324"/><line x1="696.5" y1="353" x2="724.5" y2="353"/><line x1="696.5" y1="382" x2="724.5" y2="382"/><line x1="696.5" y1="411" x2="724.5" y2="411"/></g>
<!-- 1: appearance circles -->
<circle cx="711" cy="306" r="4.6" fill="#b3915a" stroke="#866a3a" stroke-width="1"/>
<circle cx="715.4" cy="312.8" r="4.5" fill="#f6e2b8" stroke="#866a3a" stroke-width="1"/>
<circle cx="707.2" cy="312.8" r="5" fill="#6f7680" stroke="#5e6670" stroke-width="1"/>
<!-- 2: table + cube -->
<g fill="none" stroke="#866a3a" stroke-width="1.1" stroke-linejoin="round"><path d="M706.8 337 L713 333.8 L719.2 337 L719.2 343.6 L713 346.8 L706.8 343.6 Z"/><path d="M706.8 337 L713 340.2 L719.2 337 M713 340.2 L713 346.8"/></g>
<g stroke="#65727e" stroke-width="1" fill="none"><rect x="702" y="330" width="8.8" height="6.4" fill="#65727e" fill-opacity="0.25"/><line x1="704.93" y1="330" x2="704.93" y2="336.4"/><line x1="707.87" y1="330" x2="707.87" y2="336.4"/><line x1="702" y1="333.20" x2="710.8" y2="333.20"/></g>
<!-- 3: table + cube in braces -->
<g fill="none" stroke="#866a3a" stroke-width="1" stroke-linejoin="round"><path d="M707 366.2 L712 363.6 L717 366.2 L717 371.6 L712 374.2 L707 371.6 Z"/><path d="M707 366.2 L712 368.8 L717 366.2 M712 368.8 L712 374.2"/>
<path d="M706.2 365.5 q-1.8 0 -1.8 1.8 v1.2 q0 1.2 -1.2 1.2 q1.2 0 1.2 1.2 v1.4 q0 1.8 1.8 1.8"/><path d="M717.8 362 q1.8 0 1.8 1.8 v2.6 q0 1.4 1.2 1.4 q-1.2 0 -1.2 1.4 v2.8 q0 1.8 -1.8 1.8"/></g>
<g stroke="#866a3a" stroke-width="1" fill="none"><rect x="702" y="359" width="8.4" height="7" fill="#866a3a" fill-opacity="0.25"/><line x1="704.80" y1="359" x2="704.80" y2="366"/><line x1="707.60" y1="359" x2="707.60" y2="366"/><line x1="702" y1="362.50" x2="710.4" y2="362.50"/></g>
<!-- 4: table + rounded square w/ circle -->
<path d="M706 390.5 H716.5 L719.6 393.6 V405.4 H707 L704.2 402.6 V392 Z" fill="none" stroke="#866a3a" stroke-width="1.1" stroke-linejoin="round"/>
<circle cx="714" cy="399.3" r="3.9" fill="#a5854f" stroke="#866a3a" stroke-width="0.8"/>
<g stroke="#866a3a" stroke-width="1" fill="none"><rect x="702.3" y="388" width="8" height="7" fill="#866a3a" fill-opacity="0.25"/><line x1="704.97" y1="388" x2="704.97" y2="395"/><line x1="707.63" y1="388" x2="707.63" y2="395"/><line x1="702.3" y1="391.50" x2="710.3" y2="391.50"/></g>
<!-- 5: table + (x) -->
<g stroke="#866a3a" stroke-width="1" fill="none"><rect x="702.3" y="417.5" width="8" height="6.6" fill="#866a3a" fill-opacity="0.25"/><line x1="704.97" y1="417.5" x2="704.97" y2="424.1"/><line x1="707.63" y1="417.5" x2="707.63" y2="424.1"/><line x1="702.3" y1="420.80" x2="710.3" y2="420.80"/></g>
<text x="702.4" y="431.4" font-weight="bold" font-size="13" fill="#866a3a" textLength="17.6" lengthAdjust="spacingAndGlyphs">(x)</text>
</svg><svg class="abs" style="left:570px;top:5px" width="150" height="150" viewBox="570 5 150 150">
<g fill="#e7cb98">
<path d="M645 12.5 L651 21 L639 21 Z"/><path d="M645 143.5 L651 135 L639 135 Z"/>
<path d="M579.5 78 L588 72 L588 84 Z"/><path d="M710.5 78 L702 72 L702 84 Z"/>
</g>
<g fill="none" stroke="#e7cb98" stroke-width="3.2" stroke-linecap="butt">
<path d="M625 21 Q607 27 600 38"/><path d="M665 21 Q683 27 690 38"/>
</g>
<g fill="#e7cb98"><path d="M595.5 41.5 L599 33 L605 40 Z"/><path d="M694.5 41.5 L691 33 L685 40 Z"/></g>
<!-- cube body -->
<path d="M614.6 66 L624 49 L640 42.2 L658 43 L673 50 L679 62 L679 94 L672 105 L657 115 L644 113 L619 104 L614.4 96 Z" fill="#e9cd9b"/>
<path d="M624 56 L628.8 47.6 L639.6 44.6 L656.4 45.2 L670.8 53 L666.6 60.2 L650.4 64.4 L636 63.2 Z" fill="#f4d9a9"/>
<path d="M615.8 72.2 L621 70 L636 70.8 L648 77 L649.2 99.8 L645.6 107.4 L620.4 102.2 L615.4 95 Z" fill="#f4d9a9"/>
<path d="M658.8 74.6 L667.2 69.4 L676.8 62.6 L678.2 67.4 L677.8 92.6 L672 102.2 L660 108 L657.6 102.2 Z" fill="#f4d9a9"/>
<path d="M637.5 66 L637.5 80 M633 70 L637.5 75 L642 71.5" stroke="#e6ca97" stroke-width="1" fill="none"/>
<!-- axes -->
<line x1="607.6" y1="62" x2="607.6" y2="106" stroke="#7b6888" stroke-width="1.3"/>
<line x1="607.6" y1="106" x2="654" y2="119.5" stroke="#d26a44" stroke-width="1.2"/>
<line x1="607.6" y1="106" x2="618" y2="97.5" stroke="#a9c07a" stroke-width="1"/>
<text x="603.8" y="59.4" font-size="13" font-weight="bold" fill="#6e5c82" textLength="7.6" lengthAdjust="spacingAndGlyphs">Z</text>
<text x="656.6" y="127.8" font-size="13" font-weight="bold" fill="#d0643f" textLength="8" lengthAdjust="spacingAndGlyphs">X</text>
<text transform="translate(621 90.3) rotate(15) skewX(13)" font-size="11.5" fill="#7a6136" textLength="21.5" lengthAdjust="spacingAndGlyphs">Front</text>
<text transform="translate(637.5 54) rotate(26) skewX(-20)" font-size="8.5" fill="#7a6136" textLength="14" lengthAdjust="spacingAndGlyphs">Top</text>
<text transform="translate(666.5 93) rotate(-60) skewX(-12)" font-size="8.5" fill="#7a6136" textLength="16" lengthAdjust="spacingAndGlyphs">Right</text>
<!-- small cube icon + caret -->
<g stroke="#866a3a" stroke-width="1" stroke-linejoin="round">
<path d="M678 131.5 L686 129 L691.5 131.5 L691.5 140.5 L684 144 L678 140.5 Z" fill="#cdb07a"/>
<path d="M678 131.5 L684 134.5 L691.5 131.5 M684 134.5 L684 144" fill="none"/>
<path d="M678 131.5 L686 129 L691.5 131.5 L684 134.5 Z" fill="#ead3a4"/>
</g>
<path d="M699.5 134.5 L706.5 134.5 L703 138.5 Z" fill="#6b5228"/>
</svg><svg class="abs" style="left:660px;top:722px" width="64" height="28" viewBox="660 722 64 28">
<g fill="none" stroke="#866a3a" stroke-width="1.2" stroke-linejoin="round" stroke-linecap="round">
<ellipse cx="677.5" cy="735" rx="4.6" ry="2.6"/><ellipse cx="677.5" cy="735" rx="1.8" ry="0.9"/>
<path d="M672.9 735 V739.6 Q677.5 743.6 682.1 739.6 V735"/>
<path d="M668.6 738.6 H674 M668.6 742.2 H677.5 M668.6 738.6 V742.2"/>
<path d="M670.5 740.6 V742 M672.5 740.6 V742 M674.5 740.6 V742"/>
</g>
<g fill="none" stroke="#866a3a" stroke-width="1.3" stroke-linecap="butt">
<path d="M701 732.2 H712 M706.5 732.2 V742.6 M700.4 743 H712.6"/>
<path d="M702.3 732.5 L700.4 738.6 H704.2 Z M710.7 732.5 L708.8 738.6 H712.6 Z" stroke-width="0.9" stroke-linejoin="round"/>
<path d="M700.2 739 H704.4 M708.6 739 H712.8" stroke-width="1.4"/>
</g>
</svg>
</div>
<div id="panel">

<div class="abs title"><span class="sx" id="t_title" style="transform-origin:50% 50%;transform:scaleX(0.937)">Custom tables</span></div>
<div class="abs rule"></div>
<div class="abs dd">
  <div class="abs pi">PI</div>
  <div class="abs ddt"><span class="sx" id="t_dd" style="transform:scaleX(0.936)">Part Info</span></div>
  <svg class="abs" style="left:176.5px;top:10.5px" width="10" height="6.6" viewBox="-1 -1 10 6.6"><path d="M0 0 L4.0 4.6 L8 0" fill="none" stroke="#866a3a" stroke-width="1.3" stroke-linecap="round" stroke-linejoin="round"/></svg>
</div>
<div class="abs more"><i class="dot" style="left:9.3px;top:11.5px"></i><i class="dot" style="left:16px;top:11.5px"></i><i class="dot" style="left:22.7px;top:11.5px"></i></div>
<div class="abs sec">
  <svg class="abs" style="left:5.5px;top:14.5px" width="9" height="6.2" viewBox="-1 -1 9 6.2"><path d="M0 0 L3.5 4.2 L7 0" fill="none" stroke="#866a3a" stroke-width="1.3" stroke-linecap="round" stroke-linejoin="round"/></svg>
  <div class="abs sect"><span class="sx" id="t_sec" style="transform:scaleX(0.966)">Part Information</span></div>
  <i class="dot" style="left:546.4px;top:14.8px;width:2.8px;height:2.8px;background:#8e7242"></i><i class="dot" style="left:552.7px;top:14.8px;width:2.8px;height:2.8px;background:#8e7242"></i><i class="dot" style="left:559px;top:14.8px;width:2.8px;height:2.8px;background:#8e7242"></i>
</div>
<table>
<colgroup><col style="width:124px"><col style="width:124px"><col style="width:123px"><col style="width:124px"></colgroup>
<tr><th><span class="sx" id="h1" style="transform-origin:50% 50%;transform:scaleX(0.964)">Part Name</span></th><th><span class="sx" id="h2" style="transform-origin:50% 50%;transform:scaleX(0.942)">Description</span></th><th><span class="sx" id="h3" style="transform-origin:50% 50%;transform:scaleX(0.97)">Volume</span></th><th><span class="sx" id="h4" style="transform-origin:50% 50%;transform:scaleX(0.953)">Vendor</span></th></tr>
<tr><td><span class="sx" id="c11" style="transform:scaleX(0.961)">Plate</span></td><td><span class="sx" id="c12" style="transform:scaleX(0.924)">FRONT PLATE</span></td><td><span class="sx" id="c13" style="transform:scaleX(0.96)">42.914 cm³</span></td><td><span class="sx" id="c14" style="transform:scaleX(0.954)">SheetMetal Fab</span></td></tr>
<tr><td><span class="sx" id="c21" style="transform:scaleX(0.939)">Screen</span></td><td><span class="sx" id="c22" style="transform:scaleX(0.902)">FAN SCREEN</span></td><td><span class="sx" id="c23" style="transform:scaleX(0.978)">3.906 cm³</span></td><td><span class="sx" id="c24" style="transform:scaleX(0.949)">Screens'R'Us</span></td></tr>
<tr><td><span class="sx" id="c31" style="transform:scaleX(0.966)">Bumper</span></td><td><span class="sx" id="c32" style="transform:scaleX(0.92)">FAN BUMPER</span></td><td><span class="sx" id="c33" style="transform:scaleX(0.961)">0.916 cm³</span></td><td><span class="sx" id="c34" style="transform:scaleX(0.959)">N/A</span></td></tr>
</table>
<div class="abs foot"></div>
<div class="abs addb"><svg class="abs" style="left:10px;top:6px" width="20" height="19" viewBox="939 724 20 19">
<rect x="940.4" y="725" width="17.4" height="17" rx="3" fill="none" stroke="#866a3a" stroke-width="1" stroke-dasharray="3.4 2.2"/>
<g stroke="#866a3a" stroke-width="1" fill="none"><rect x="941.2" y="727.8" width="10" height="7.6" fill="#866a3a" fill-opacity="0.25"/><line x1="944.53" y1="727.8" x2="944.53" y2="735.4"/><line x1="947.87" y1="727.8" x2="947.87" y2="735.4"/><line x1="941.2" y1="731.60" x2="951.2" y2="731.60"/></g>
<path d="M950.3 738.2 H956.3 M953.3 735.2 V741.2" stroke="#f2d7a5" stroke-width="3.2"/>
<path d="M950.6 738.2 H956 M953.3 735.5 V740.9" stroke="#6b5228" stroke-width="1.3"/>
</svg>
  <div class="abs addt"><span class="sx" id="t_add" style="transform:scaleX(0.946)">Add custom tables</span></div>
</div>
<div class="abs help">?</div>

</div>
<svg id="decor" width="1300" height="750" viewBox="0 0 1300 750">
<path d="M-23.7 107.5 A321 321 0 0 1 171.2 257.1" fill="none" stroke="#fff" stroke-width="16" stroke-opacity="0.07" />
<path d="M172.0 580.5 A322.9 322.9 0 0 1 -23.2 729.5" fill="none" stroke="#fff" stroke-width="17.2" stroke-opacity="0.32" />
<line x1="16.3" y1="489.6" x2="164.7" y2="576.3" stroke="#fff" stroke-width="1.0" stroke-opacity="0.5"/>
<circle cx="16.3" cy="489.6" r="2.2" fill="#fff" fill-opacity="1"/>
<path d="M-32.0 138.4 A289 289 0 0 1 168.3 329.1" fill="none" stroke="#fff" stroke-width="1.1" stroke-opacity="0.55" />
<circle cx="63.5" cy="184.0" r="2.4" fill="#fff" fill-opacity="1"/>
<circle cx="141.5" cy="270.0" r="1.8" fill="#fff" fill-opacity="1"/>
<circle cx="157.5" cy="301.5" r="1.6" fill="#fff" fill-opacity="1"/>
<circle cx="165.0" cy="320.0" r="1.6" fill="#fff" fill-opacity="1"/>
<circle cx="168.5" cy="329.0" r="1.8" fill="#fff" fill-opacity="1"/>
<path d="M62.5 651.8 A289 289 0 0 1 28.3 673.1" fill="none" stroke="#fff" stroke-width="3" stroke-opacity="0.75" />
<path d="M28.3 673.1 A289 289 0 0 1 -8.6 689.4" fill="none" stroke="#fff" stroke-width="3" stroke-opacity="0.5" />
<path d="M-8.6 689.4 A289 289 0 0 1 -56.6 702.2" fill="none" stroke="#fff" stroke-width="3" stroke-opacity="0.3" />
<circle cx="63.0" cy="652.5" r="4.2" fill="#fff" fill-opacity="1"/>
<path d="M-43.5 58.6 A364.5 364.5 0 0 1 212.4 241.7" fill="none" stroke="#fff" stroke-width="3.3" stroke-opacity="1" />
<path d="M212.4 241.7 A364.5 364.5 0 0 1 217.9 252.0" fill="none" stroke="#fff" stroke-width="3.1875" stroke-opacity="1" />
<path d="M217.5 251.2 A364.5 364.5 0 0 1 222.7 261.7" fill="none" stroke="#fff" stroke-width="2.9625" stroke-opacity="1" />
<path d="M222.3 260.9 A364.5 364.5 0 0 1 227.2 271.6" fill="none" stroke="#fff" stroke-width="2.7375" stroke-opacity="1" />
<path d="M226.8 270.7 A364.5 364.5 0 0 1 231.3 281.5" fill="none" stroke="#fff" stroke-width="2.5125" stroke-opacity="1" />
<path d="M231.0 280.6 A364.5 364.5 0 0 1 235.2 291.6" fill="none" stroke="#fff" stroke-width="2.2874999999999996" stroke-opacity="1" />
<path d="M234.9 290.7 A364.5 364.5 0 0 1 238.8 301.8" fill="none" stroke="#fff" stroke-width="2.0625" stroke-opacity="1" />
<path d="M238.5 300.9 A364.5 364.5 0 0 1 242.1 312.1" fill="none" stroke="#fff" stroke-width="1.8375" stroke-opacity="1" />
<path d="M241.8 311.2 A364.5 364.5 0 0 1 245.1 322.5" fill="none" stroke="#fff" stroke-width="1.6125" stroke-opacity="1" />
<path d="M244.8 321.5 A364.5 364.5 0 0 1 239.7 530.8" fill="none" stroke="#fff" stroke-width="1.4" stroke-opacity="0.92" />
<path d="M239.7 530.8 A364.5 364.5 0 0 1 107.3 712.6" fill="none" stroke="#fff" stroke-width="1.15" stroke-opacity="0.85" />
<circle cx="107.5" cy="122.5" r="3.8" fill="#fff" fill-opacity="1"/>
<circle cx="244.3" cy="321.5" r="3.8" fill="#fff" fill-opacity="1"/>
<circle cx="239.4" cy="530.7" r="4.2" fill="#fff" fill-opacity="1"/>
<circle cx="100.3" cy="717.4" r="1.7" fill="#fff" fill-opacity="1"/>
<circle cx="91.0" cy="723.0" r="1.7" fill="#fff" fill-opacity="1"/>
<circle cx="81.7" cy="729.0" r="1.7" fill="#fff" fill-opacity="1"/>
<circle cx="72.3" cy="735.0" r="1.7" fill="#fff" fill-opacity="1"/>
<circle cx="63.0" cy="740.7" r="1.7" fill="#fff" fill-opacity="1"/>
<circle cx="53.7" cy="746.0" r="1.7" fill="#fff" fill-opacity="1"/>
<circle cx="168.7" cy="508.0" r="1.7" fill="#fff" fill-opacity="1"/>
<circle cx="16.0" cy="490.0" r="1.8" fill="#fff" fill-opacity="1"/>
<g><line x1="920.0" y1="375.3" x2="891.7" y2="424.4" stroke="#fff" stroke-width="1" stroke-opacity="0.24"/>
<line x1="891.7" y1="424.4" x2="835.0" y2="424.4" stroke="#fff" stroke-width="1" stroke-opacity="0.24"/>
<line x1="835.0" y1="424.4" x2="806.6" y2="375.3" stroke="#fff" stroke-width="1" stroke-opacity="0.24"/>
<line x1="806.6" y1="375.3" x2="835.0" y2="326.2" stroke="#fff" stroke-width="1" stroke-opacity="0.24"/>
<line x1="835.0" y1="326.2" x2="891.7" y2="326.2" stroke="#fff" stroke-width="1" stroke-opacity="0.24"/>
<line x1="891.7" y1="326.2" x2="920.0" y2="375.3" stroke="#fff" stroke-width="1" stroke-opacity="0.24"/>
<line x1="920.0" y1="473.5" x2="891.7" y2="522.6" stroke="#fff" stroke-width="1" stroke-opacity="0.24"/>
<line x1="891.7" y1="522.6" x2="835.0" y2="522.6" stroke="#fff" stroke-width="1" stroke-opacity="0.24"/>
<line x1="835.0" y1="522.6" x2="806.6" y2="473.5" stroke="#fff" stroke-width="1" stroke-opacity="0.24"/>
<line x1="806.6" y1="473.5" x2="835.0" y2="424.4" stroke="#fff" stroke-width="1" stroke-opacity="0.24"/>
<line x1="891.7" y1="424.4" x2="920.0" y2="473.5" stroke="#fff" stroke-width="1" stroke-opacity="0.24"/>
<line x1="1005.1" y1="326.2" x2="976.8" y2="375.3" stroke="#fff" stroke-width="1" stroke-opacity="0.24"/>
<line x1="976.8" y1="375.3" x2="920.0" y2="375.3" stroke="#fff" stroke-width="1" stroke-opacity="0.24"/>
<line x1="891.7" y1="326.2" x2="920.0" y2="277.1" stroke="#fff" stroke-width="1" stroke-opacity="0.24"/>
<line x1="920.0" y1="277.1" x2="976.8" y2="277.1" stroke="#fff" stroke-width="1" stroke-opacity="0.24"/>
<line x1="976.8" y1="277.1" x2="1005.1" y2="326.2" stroke="#fff" stroke-width="1" stroke-opacity="0.24"/>
<line x1="1005.1" y1="424.4" x2="976.8" y2="473.5" stroke="#fff" stroke-width="1" stroke-opacity="0.24"/>
<line x1="976.8" y1="473.5" x2="920.0" y2="473.5" stroke="#fff" stroke-width="1" stroke-opacity="0.24"/>
<line x1="976.8" y1="375.3" x2="1005.1" y2="424.4" stroke="#fff" stroke-width="1" stroke-opacity="0.24"/>
<line x1="1090.2" y1="375.3" x2="1061.8" y2="424.4" stroke="#fff" stroke-width="1" stroke-opacity="0.24"/>
<line x1="1061.8" y1="424.4" x2="1005.1" y2="424.4" stroke="#fff" stroke-width="1" stroke-opacity="0.24"/>
<line x1="1005.1" y1="326.2" x2="1061.8" y2="326.2" stroke="#fff" stroke-width="1" stroke-opacity="0.24"/>
<line x1="1061.8" y1="326.2" x2="1090.2" y2="375.3" stroke="#fff" stroke-width="1" stroke-opacity="0.24"/>
<line x1="1175.2" y1="326.2" x2="1146.8" y2="375.3" stroke="#fff" stroke-width="1" stroke-opacity="0.24"/>
<line x1="1146.8" y1="375.3" x2="1090.2" y2="375.3" stroke="#fff" stroke-width="1" stroke-opacity="0.24"/>
<line x1="1061.8" y1="326.2" x2="1090.2" y2="277.1" stroke="#fff" stroke-width="1" stroke-opacity="0.24"/>
<line x1="1090.2" y1="277.1" x2="1146.8" y2="277.1" stroke="#fff" stroke-width="1" stroke-opacity="0.24"/>
<line x1="1146.8" y1="277.1" x2="1175.2" y2="326.2" stroke="#fff" stroke-width="1" stroke-opacity="0.24"/>
<line x1="1175.2" y1="424.4" x2="1146.8" y2="473.5" stroke="#fff" stroke-width="1" stroke-opacity="0.24"/>
<line x1="1146.8" y1="473.5" x2="1090.2" y2="473.5" stroke="#fff" stroke-width="1" stroke-opacity="0.24"/>
<line x1="1090.2" y1="473.5" x2="1061.8" y2="424.4" stroke="#fff" stroke-width="1" stroke-opacity="0.24"/>
<line x1="1146.8" y1="375.3" x2="1175.2" y2="424.4" stroke="#fff" stroke-width="1" stroke-opacity="0.24"/>
<line x1="1260.2" y1="375.3" x2="1231.9" y2="424.4" stroke="#fff" stroke-width="1" stroke-opacity="0.24"/>
<line x1="1231.9" y1="424.4" x2="1175.2" y2="424.4" stroke="#fff" stroke-width="1" stroke-opacity="0.24"/>
<line x1="1175.2" y1="326.2" x2="1231.9" y2="326.2" stroke="#fff" stroke-width="1" stroke-opacity="0.24"/>
<line x1="1231.9" y1="326.2" x2="1260.2" y2="375.3" stroke="#fff" stroke-width="1" stroke-opacity="0.24"/>
<line x1="1260.2" y1="473.5" x2="1231.9" y2="522.6" stroke="#fff" stroke-width="1" stroke-opacity="0.24"/>
<line x1="1231.9" y1="522.6" x2="1175.2" y2="522.6" stroke="#fff" stroke-width="1" stroke-opacity="0.24"/>
<line x1="1175.2" y1="522.6" x2="1146.8" y2="473.5" stroke="#fff" stroke-width="1" stroke-opacity="0.24"/>
<line x1="1231.9" y1="424.4" x2="1260.2" y2="473.5" stroke="#fff" stroke-width="1" stroke-opacity="0.24"/>
<line x1="1260.2" y1="571.7" x2="1231.9" y2="620.8" stroke="#fff" stroke-width="1" stroke-opacity="0.24"/>
<line x1="1231.9" y1="620.8" x2="1175.2" y2="620.8" stroke="#fff" stroke-width="1" stroke-opacity="0.24"/>
<line x1="1175.2" y1="620.8" x2="1146.8" y2="571.7" stroke="#fff" stroke-width="1" stroke-opacity="0.24"/>
<line x1="1146.8" y1="571.7" x2="1175.2" y2="522.6" stroke="#fff" stroke-width="1" stroke-opacity="0.24"/>
<line x1="1231.9" y1="522.6" x2="1260.2" y2="571.7" stroke="#fff" stroke-width="1" stroke-opacity="0.24"/>
<line x1="1345.3" y1="326.2" x2="1316.9" y2="375.3" stroke="#fff" stroke-width="1" stroke-opacity="0.24"/>
<line x1="1316.9" y1="375.3" x2="1260.2" y2="375.3" stroke="#fff" stroke-width="1" stroke-opacity="0.24"/>
<line x1="1231.9" y1="326.2" x2="1260.2" y2="277.1" stroke="#fff" stroke-width="1" stroke-opacity="0.24"/>
<line x1="1260.2" y1="277.1" x2="1316.9" y2="277.1" stroke="#fff" stroke-width="1" stroke-opacity="0.24"/>
<line x1="1316.9" y1="277.1" x2="1345.3" y2="326.2" stroke="#fff" stroke-width="1" stroke-opacity="0.24"/>
<line x1="1345.3" y1="424.4" x2="1316.9" y2="473.5" stroke="#fff" stroke-width="1" stroke-opacity="0.24"/>
<line x1="1316.9" y1="473.5" x2="1260.2" y2="473.5" stroke="#fff" stroke-width="1" stroke-opacity="0.24"/>
<line x1="1316.9" y1="375.3" x2="1345.3" y2="424.4" stroke="#fff" stroke-width="1" stroke-opacity="0.24"/>
<line x1="1345.3" y1="522.6" x2="1316.9" y2="571.7" stroke="#fff" stroke-width="1" stroke-opacity="0.24"/>
<line x1="1316.9" y1="571.7" x2="1260.2" y2="571.7" stroke="#fff" stroke-width="1" stroke-opacity="0.24"/>
<line x1="1316.9" y1="473.5" x2="1345.3" y2="522.6" stroke="#fff" stroke-width="1" stroke-opacity="0.24"/></g>
<circle cx="891.7" cy="326.2" r="1.3" fill="#fff" fill-opacity="0.6"/>
<circle cx="1005.1" cy="424.4" r="1.3" fill="#fff" fill-opacity="0.6"/>
<circle cx="1260.2" cy="277.1" r="1.3" fill="#fff" fill-opacity="0.6"/>
<circle cx="976.8" cy="277.1" r="1.3" fill="#fff" fill-opacity="0.6"/>
<circle cx="1061.8" cy="424.4" r="1.3" fill="#fff" fill-opacity="0.6"/>
<circle cx="920.0" cy="375.3" r="1.3" fill="#fff" fill-opacity="0.6"/>
<circle cx="1090.2" cy="473.5" r="1.3" fill="#fff" fill-opacity="0.6"/>
<circle cx="835.0" cy="424.4" r="1.3" fill="#fff" fill-opacity="0.6"/>
<circle cx="1146.8" cy="375.3" r="1.3" fill="#fff" fill-opacity="0.6"/>
<circle cx="835.0" cy="522.6" r="1.3" fill="#fff" fill-opacity="0.6"/>
<circle cx="1231.9" cy="326.2" r="1.3" fill="#fff" fill-opacity="0.6"/>
<circle cx="1175.2" cy="326.2" r="1.3" fill="#fff" fill-opacity="0.6"/>
<circle cx="1231.9" cy="620.8" r="1.3" fill="#fff" fill-opacity="0.6"/>
<circle cx="891.7" cy="424.4" r="1.3" fill="#fff" fill-opacity="0.6"/>
<circle cx="1175.2" cy="620.8" r="1.3" fill="#fff" fill-opacity="0.6"/>
<circle cx="891.7" cy="522.6" r="1.3" fill="#fff" fill-opacity="0.6"/>
<circle cx="976.8" cy="375.3" r="1.3" fill="#fff" fill-opacity="0.6"/>
<circle cx="1260.2" cy="375.3" r="1.3" fill="#fff" fill-opacity="0.6"/>
<circle cx="1090.2" cy="277.1" r="1.3" fill="#fff" fill-opacity="0.6"/>
<circle cx="1146.8" cy="277.1" r="1.3" fill="#fff" fill-opacity="0.6"/>
<circle cx="920.0" cy="473.5" r="1.3" fill="#fff" fill-opacity="0.6"/>
<circle cx="806.6" cy="375.3" r="1.3" fill="#fff" fill-opacity="0.6"/>
<circle cx="1146.8" cy="571.7" r="1.3" fill="#fff" fill-opacity="0.6"/>
<circle cx="1146.8" cy="473.5" r="1.3" fill="#fff" fill-opacity="0.6"/>
<circle cx="1231.9" cy="424.4" r="1.3" fill="#fff" fill-opacity="0.6"/>
<circle cx="1005.1" cy="326.2" r="1.3" fill="#fff" fill-opacity="0.6"/>
<circle cx="1231.9" cy="522.6" r="1.3" fill="#fff" fill-opacity="0.6"/>
<circle cx="1175.2" cy="522.6" r="1.3" fill="#fff" fill-opacity="0.6"/>
<circle cx="1175.2" cy="424.4" r="1.3" fill="#fff" fill-opacity="0.6"/>
<circle cx="1260.2" cy="571.7" r="1.3" fill="#fff" fill-opacity="0.6"/>
<circle cx="1061.8" cy="326.2" r="1.3" fill="#fff" fill-opacity="0.6"/>
<circle cx="1260.2" cy="473.5" r="1.3" fill="#fff" fill-opacity="0.6"/>
<circle cx="976.8" cy="473.5" r="1.3" fill="#fff" fill-opacity="0.6"/>
<circle cx="920.0" cy="277.1" r="1.3" fill="#fff" fill-opacity="0.6"/>
<circle cx="1090.2" cy="375.3" r="1.3" fill="#fff" fill-opacity="0.6"/>
<circle cx="835.0" cy="326.2" r="1.3" fill="#fff" fill-opacity="0.6"/>
<circle cx="806.6" cy="473.5" r="1.3" fill="#fff" fill-opacity="0.6"/>
<path d="M850.3 509.9 A364.6 364.6 0 0 1 983.3 103.5" fill="none" stroke="#fff" stroke-width="1.8" stroke-opacity="1" />
<circle cx="1208.3" cy="34.1" r="1.7" fill="#fff" fill-opacity="0.9"/>
<circle cx="1219.0" cy="34.5" r="1.7" fill="#fff" fill-opacity="0.9"/>
<circle cx="1229.7" cy="35.3" r="1.7" fill="#fff" fill-opacity="0.9"/>
<circle cx="1240.4" cy="36.4" r="1.7" fill="#fff" fill-opacity="0.9"/>
<circle cx="1251.1" cy="37.9" r="1.7" fill="#fff" fill-opacity="0.9"/>
<circle cx="1261.7" cy="39.6" r="1.7" fill="#fff" fill-opacity="0.9"/>
<circle cx="1272.2" cy="41.6" r="1.7" fill="#fff" fill-opacity="0.9"/>
<circle cx="1282.7" cy="44.0" r="1.7" fill="#fff" fill-opacity="0.9"/>
<circle cx="1293.2" cy="46.7" r="1.7" fill="#fff" fill-opacity="0.9"/>
<circle cx="1303.5" cy="49.6" r="1.7" fill="#fff" fill-opacity="0.9"/>
<circle cx="1186.7" cy="34.1" r="1.7" fill="#fff" fill-opacity="0.9"/>
<circle cx="1176.0" cy="34.5" r="1.7" fill="#fff" fill-opacity="0.9"/>
<circle cx="1165.3" cy="35.3" r="1.7" fill="#fff" fill-opacity="0.9"/>
<circle cx="1154.6" cy="36.4" r="1.7" fill="#fff" fill-opacity="0.9"/>
<circle cx="1143.9" cy="37.9" r="1.7" fill="#fff" fill-opacity="0.9"/>
<circle cx="1133.3" cy="39.6" r="1.7" fill="#fff" fill-opacity="0.9"/>
<circle cx="1122.8" cy="41.6" r="1.7" fill="#fff" fill-opacity="0.9"/>
<circle cx="1112.3" cy="44.0" r="1.7" fill="#fff" fill-opacity="0.9"/>
<circle cx="1101.8" cy="46.7" r="1.7" fill="#fff" fill-opacity="0.9"/>
<circle cx="1091.5" cy="49.6" r="1.7" fill="#fff" fill-opacity="0.9"/>
<circle cx="1081.3" cy="52.9" r="1.7" fill="#fff" fill-opacity="0.9"/>
<circle cx="1071.1" cy="56.5" r="1.7" fill="#fff" fill-opacity="0.9"/>
<circle cx="1061.1" cy="60.4" r="1.7" fill="#fff" fill-opacity="0.9"/>
<circle cx="1051.2" cy="64.5" r="1.7" fill="#fff" fill-opacity="0.9"/>
<circle cx="1041.4" cy="69.0" r="1.7" fill="#fff" fill-opacity="0.9"/>
<circle cx="1031.7" cy="73.8" r="1.7" fill="#fff" fill-opacity="0.9"/>
<circle cx="1022.2" cy="78.8" r="1.7" fill="#fff" fill-opacity="0.9"/>
<circle cx="1012.9" cy="84.1" r="1.7" fill="#fff" fill-opacity="0.9"/>
<circle cx="1003.7" cy="89.7" r="1.7" fill="#fff" fill-opacity="0.9"/>
<circle cx="994.7" cy="95.5" r="1.7" fill="#fff" fill-opacity="0.9"/>
<circle cx="1197.3" cy="33.9" r="3.9" fill="#fff" fill-opacity="1"/>
<path d="M1022.1 167.6 A289.4 289.4 0 0 1 1198.0 109.1" fill="none" stroke="#fff" stroke-width="1.8" stroke-opacity="1" />
<path d="M1198.0 110.6 A287.9 287.9 0 0 1 1318.2 137.6" fill="none" stroke="#fff" stroke-width="6" stroke-opacity="0.5" />
<circle cx="1198.0" cy="109.2" r="5.3" fill="#fff" fill-opacity="1"/>
<circle cx="1010.0" cy="177.2" r="1.7" fill="#fff" fill-opacity="1"/>
<circle cx="998.4" cy="187.6" r="1.7" fill="#fff" fill-opacity="1"/>
<circle cx="987.4" cy="198.5" r="1.7" fill="#fff" fill-opacity="1"/>
<circle cx="976.9" cy="210.0" r="1.7" fill="#fff" fill-opacity="1"/>
<circle cx="967.2" cy="222.0" r="1.7" fill="#fff" fill-opacity="1"/>
<circle cx="958.0" cy="234.5" r="1.7" fill="#fff" fill-opacity="1"/>
<circle cx="949.6" cy="247.5" r="1.7" fill="#fff" fill-opacity="1"/>
<circle cx="941.9" cy="261.0" r="1.7" fill="#fff" fill-opacity="1"/>
<circle cx="934.9" cy="274.8" r="1.7" fill="#fff" fill-opacity="1"/>
<circle cx="928.6" cy="289.0" r="1.7" fill="#fff" fill-opacity="1"/>
<circle cx="923.1" cy="303.5" r="1.7" fill="#fff" fill-opacity="1"/>
<circle cx="918.4" cy="318.3" r="1.7" fill="#fff" fill-opacity="1"/>
<circle cx="914.5" cy="333.3" r="1.7" fill="#fff" fill-opacity="1"/>
<circle cx="911.5" cy="348.5" r="1.7" fill="#fff" fill-opacity="1"/>
<circle cx="909.2" cy="363.8" r="1.7" fill="#fff" fill-opacity="1"/>
<circle cx="907.7" cy="379.2" r="1.7" fill="#fff" fill-opacity="1"/>
<circle cx="907.1" cy="394.7" r="1.7" fill="#fff" fill-opacity="1"/>
<circle cx="907.3" cy="410.2" r="1.7" fill="#fff" fill-opacity="1"/>
<circle cx="908.4" cy="425.7" r="1.7" fill="#fff" fill-opacity="1"/>
<circle cx="910.3" cy="441.1" r="1.7" fill="#fff" fill-opacity="1"/>
<circle cx="912.9" cy="456.4" r="1.7" fill="#fff" fill-opacity="1"/>
<circle cx="916.5" cy="471.5" r="1.7" fill="#fff" fill-opacity="1"/>
<circle cx="921.0" cy="487.5" r="2.5" fill="#fff" fill-opacity="1"/>
<path d="M921.9 486.7 A288.4 288.4 0 0 0 1196.5 686.9" fill="none" stroke="#fff" stroke-width="5.4" stroke-opacity="0.36" />
<path d="M1304.5 665.9 A288.4 288.4 0 0 1 1196.5 686.9" fill="none" stroke="#fff" stroke-width="1.6" stroke-opacity="0.5" />
<path d="M917.5 559.9 A322.3 322.3 0 0 0 1196.5 720.8" fill="none" stroke="#fff" stroke-width="18.5" stroke-opacity="0.4" />
<path d="M1196.5 75.7 A322.8 322.8 0 0 1 1357.9 118.9" fill="none" stroke="#fff" stroke-width="20" stroke-opacity="0.38" />
<line x1="1196.6" y1="536.0" x2="1196.6" y2="750.0" stroke="#fff" stroke-width="1.1" stroke-opacity="0.45"/>
<circle cx="1196.6" cy="536.0" r="2.6" fill="#fff" fill-opacity="1"/>
<circle cx="1196.6" cy="623.0" r="1.6" fill="#fff" fill-opacity="1"/>
<circle cx="1196.6" cy="628.5" r="1.6" fill="#fff" fill-opacity="1"/>
<circle cx="1196.6" cy="637.0" r="3" fill="#fff" fill-opacity="1"/>
<circle cx="1196.6" cy="711.8" r="2.2" fill="#fff" fill-opacity="1"/>
<circle cx="1196.6" cy="730.0" r="2.2" fill="#fff" fill-opacity="1"/>
<circle cx="1196.6" cy="747.0" r="4.2" fill="#fff" fill-opacity="1"/>
<circle cx="1184.3" cy="387.7" r="156.3" fill="none" stroke="#fff" stroke-width="1.8"/>
<path d="M1184.3 286.7 A101 101 0 0 1 1285.3 387.7" fill="none" stroke="#fff" stroke-width="1.5" stroke-opacity="1" />
<path d="M1285.3 387.7 A101 101 0 0 1 1255.7 459.1" fill="none" stroke="#fff" stroke-width="2.0" stroke-opacity="1" />
<path d="M1255.7 459.1 A101 101 0 0 1 1184.3 488.7" fill="none" stroke="#fff" stroke-width="2.8" stroke-opacity="1" />
<path d="M1184.3 446.7 A59 59 0 0 1 1184.3 328.7" fill="none" stroke="#fff" stroke-width="1.8" stroke-opacity="1" />
<circle cx="1014.5" cy="293.4" r="5" fill="#fff" fill-opacity="1"/>
<circle cx="1013.6" cy="325.2" r="5" fill="#fff" fill-opacity="1"/>
<circle cx="1253.0" cy="250.8" r="5" fill="#fff" fill-opacity="1"/>
<circle cx="1204.9" cy="278.0" r="5" fill="#fff" fill-opacity="1"/>
<circle cx="1260.7" cy="350.6" r="5" fill="#fff" fill-opacity="1"/>
<circle cx="1265.2" cy="382.3" r="4" fill="#fff" fill-opacity="1"/>
<circle cx="1262.0" cy="396.8" r="4" fill="#fff" fill-opacity="1"/>
<circle cx="1154.1" cy="377.3" r="5.5" fill="#fff" fill-opacity="1"/>
<circle cx="1191.7" cy="429.4" r="5.5" fill="#fff" fill-opacity="1"/>
<circle cx="1232.1" cy="450.3" r="5.5" fill="#fff" fill-opacity="1"/>
<circle cx="1079.3" cy="398.2" r="4" fill="#fff" fill-opacity="1"/>
<circle cx="1058.9" cy="370.5" r="3" fill="#fff" fill-opacity="1"/>
<circle cx="1054.4" cy="252.6" r="3" fill="#fff" fill-opacity="1"/>
<circle cx="1064.8" cy="451.2" r="3" fill="#fff" fill-opacity="1"/>
<circle cx="1142.8" cy="516.9" r="5.5" fill="#fff" fill-opacity="1"/>
<circle cx="1173.6" cy="480.7" r="3.5" fill="#fff" fill-opacity="1"/>
<circle cx="1183.6" cy="487.5" r="3" fill="#fff" fill-opacity="1"/>
<circle cx="1198.5" cy="454.8" r="3" fill="#fff" fill-opacity="1"/>
<circle cx="1210.8" cy="352.4" r="3" fill="#fff" fill-opacity="1"/>
<circle cx="1201.7" cy="356.0" r="2" fill="#fff" fill-opacity="1"/>
<circle cx="1249.3" cy="355.0" r="3" fill="#fff" fill-opacity="1"/>
<circle cx="1253.0" cy="327.4" r="3" fill="#fff" fill-opacity="1"/>
<circle cx="1107.4" cy="283.5" r="3" fill="#fff" fill-opacity="1"/>
<circle cx="1102.9" cy="275.8" r="2.5" fill="#fff" fill-opacity="1"/>
<circle cx="1157.8" cy="281.2" r="2" fill="#fff" fill-opacity="1"/>
<circle cx="1200.4" cy="270.0" r="2" fill="#fff" fill-opacity="1"/>
<circle cx="1297.8" cy="326.5" r="3" fill="#fff" fill-opacity="1"/>
<circle cx="1142.3" cy="558.8" r="5.5" fill="#fff" fill-opacity="1"/>
<circle cx="1282.0" cy="600.4" r="5.5" fill="#fff" fill-opacity="1"/>
<circle cx="982.0" cy="692.7" r="3.6" fill="#fff" fill-opacity="1"/>
<circle cx="1027.0" cy="632.7" r="2.5" fill="#fff" fill-opacity="1"/>
<circle cx="1094.0" cy="746.5" r="3.5" fill="#fff" fill-opacity="1"/>
<circle cx="1034.6" cy="724.0" r="1.5" fill="#fff" fill-opacity="1"/>
<circle cx="727.3" cy="266.2" r="5" fill="#fff" fill-opacity="1"/>
<circle cx="638.3" cy="331.8" r="5" fill="#fff" fill-opacity="1"/>
<circle cx="637.7" cy="374.2" r="5" fill="#fff" fill-opacity="1"/>
<circle cx="777.3" cy="415.9" r="5" fill="#fff" fill-opacity="1"/>
<circle cx="828.5" cy="316.8" r="5" fill="#fff" fill-opacity="1"/>
<circle cx="816.3" cy="295.0" r="3.5" fill="#fff" fill-opacity="1"/>
<circle cx="812.6" cy="276.6" r="2.5" fill="#fff" fill-opacity="1"/>
<circle cx="669.0" cy="296.0" r="3.5" fill="#fff" fill-opacity="1"/>
<circle cx="677.6" cy="302.0" r="2.5" fill="#fff" fill-opacity="1"/>
<circle cx="694.2" cy="269.9" r="3" fill="#fff" fill-opacity="1"/>
<circle cx="629.0" cy="266.8" r="2" fill="#fff" fill-opacity="1"/>
<circle cx="638.3" cy="276.6" r="1.5" fill="#fff" fill-opacity="1"/>
<circle cx="774.8" cy="250.0" r="2" fill="#fff" fill-opacity="1"/>
<circle cx="853.0" cy="250.0" r="2" fill="#fff" fill-opacity="1"/>
<circle cx="728.2" cy="330.6" r="2" fill="#fff" fill-opacity="1"/>
<circle cx="808.0" cy="375.7" r="2" fill="#fff" fill-opacity="1"/>
<circle cx="836.0" cy="326.6" r="1.5" fill="#fff" fill-opacity="1"/>
<circle cx="876.7" cy="287.7" r="5.5" fill="#fff" fill-opacity="1"/>
<circle cx="870.0" cy="252.3" r="3" fill="#fff" fill-opacity="1"/>
<circle cx="989.3" cy="279.0" r="4" fill="#fff" fill-opacity="1"/>
<circle cx="976.7" cy="452.0" r="5.5" fill="#fff" fill-opacity="1"/>
<circle cx="802.0" cy="250.0" r="1.5" fill="#fff" fill-opacity="1"/>
<circle cx="823.0" cy="250.0" r="1.5" fill="#fff" fill-opacity="1"/>
<line x1="609.0" y1="266.0" x2="727.0" y2="266.0" stroke="#fff" stroke-width="1" stroke-opacity="0.4"/>
<line x1="609.0" y1="276.6" x2="638.0" y2="276.6" stroke="#fff" stroke-width="1" stroke-opacity="0.4"/>
<line x1="610.7" y1="283.7" x2="632.0" y2="322.0" stroke="#fff" stroke-width="1" stroke-opacity="0.4"/>
<line x1="707.4" y1="248.4" x2="639.9" y2="365.0" stroke="#fff" stroke-width="1" stroke-opacity="0.4"/>
<line x1="682.8" y1="253.0" x2="777.9" y2="415.9" stroke="#fff" stroke-width="1" stroke-opacity="0.4"/>
<line x1="719.6" y1="295.3" x2="814.7" y2="295.3" stroke="#fff" stroke-width="1" stroke-opacity="0.4"/>
<line x1="780.0" y1="250.0" x2="860.0" y2="250.0" stroke="#fff" stroke-width="1" stroke-opacity="0.4"/>
<line x1="790.0" y1="250.0" x2="816.7" y2="295.0" stroke="#fff" stroke-width="1" stroke-opacity="0.4"/>
<line x1="823.3" y1="250.0" x2="810.0" y2="276.7" stroke="#fff" stroke-width="1" stroke-opacity="0.4"/>
<line x1="976.7" y1="452.0" x2="1040.0" y2="452.0" stroke="#fff" stroke-width="1" stroke-opacity="0.4"/>
<line x1="1206.7" y1="470.0" x2="1283.3" y2="600.0" stroke="#fff" stroke-width="1" stroke-opacity="0.4"/>
<line x1="1141.7" y1="559.3" x2="1200.0" y2="470.0" stroke="#fff" stroke-width="1" stroke-opacity="0.4"/>
<line x1="920.0" y1="277.1" x2="905.0" y2="250.0" stroke="#fff" stroke-width="1" stroke-opacity="0.4"/>
<line x1="976.7" y1="277.1" x2="992.0" y2="250.0" stroke="#fff" stroke-width="1" stroke-opacity="0.4"/>
<line x1="1097.6" y1="269.3" x2="1197.3" y2="442.3" stroke="#fff" stroke-width="1" stroke-opacity="0.28"/>
<line x1="1188.5" y1="251.7" x2="1285.3" y2="418.9" stroke="#fff" stroke-width="1" stroke-opacity="0.28"/>
<line x1="1256.0" y1="254.7" x2="1300.0" y2="331.0" stroke="#fff" stroke-width="1" stroke-opacity="0.28"/>
<line x1="1223.7" y1="421.8" x2="1267.7" y2="345.6" stroke="#fff" stroke-width="1" stroke-opacity="0.28"/>
<line x1="1080.0" y1="398.4" x2="1300.0" y2="398.4" stroke="#fff" stroke-width="1" stroke-opacity="0.28"/>
<line x1="1085.0" y1="451.0" x2="1300.0" y2="451.0" stroke="#fff" stroke-width="1" stroke-opacity="0.28"/>
<line x1="1150.0" y1="520.0" x2="1210.0" y2="416.0" stroke="#fff" stroke-width="1" stroke-opacity="0.28"/>
<line x1="1175.0" y1="560.0" x2="1240.0" y2="447.0" stroke="#fff" stroke-width="1" stroke-opacity="0.28"/>
<line x1="1130.0" y1="330.0" x2="1180.0" y2="243.0" stroke="#fff" stroke-width="1" stroke-opacity="0.28"/>
<line x1="1214.0" y1="345.0" x2="1262.0" y2="428.0" stroke="#fff" stroke-width="1" stroke-opacity="0.28"/>
</svg>
</body></html>
